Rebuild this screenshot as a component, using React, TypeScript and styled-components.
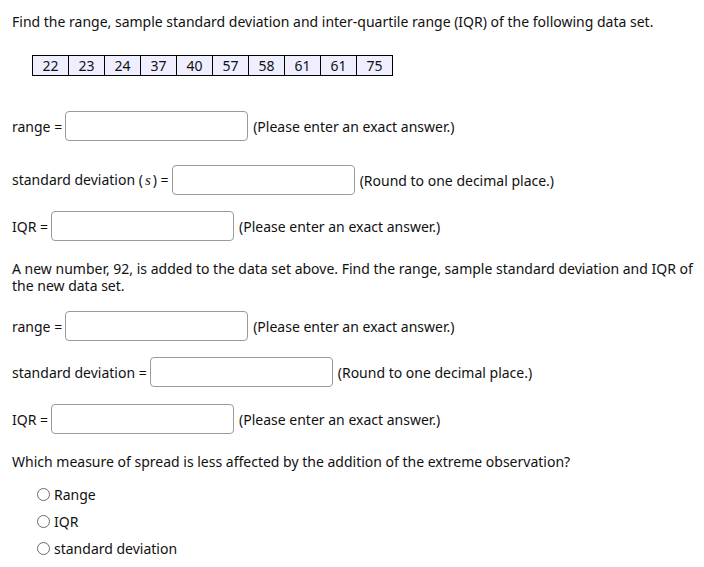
import React from "react";
import styled, { createGlobalStyle } from "styled-components";

const Global = createGlobalStyle`
  html, body { margin: 0; padding: 0; background: #fff; }
  body { font-family: "Noto Sans", "Open Sans", sans-serif; font-size: 14px; color: #111; }
`;

const Page = styled.div`
  padding: 13px 6px 0 12px;
  line-height: 17px;
`;

const Para = styled.p<{ $top?: number }>`
  margin: ${(p) => p.$top ?? 0}px 0 0 0;
  line-height: 17px;
`;

const DataTable = styled.table`
  margin: 25px 0 0 20px;
  border-collapse: collapse;
  background: #eeeeff;
`;

const Cell = styled.td`
  border: 1px solid #000;
  width: 35px;
  height: 19px;
  padding: 0;
  text-align: center;
  line-height: 19px;
`;

const Row = styled.div<{ $top: number }>`
  display: flex;
  align-items: center;
  margin-top: ${(p) => p.$top}px;
  height: 30px;
`;

const Label = styled.span`
  white-space: pre;
  margin-right: 3px;
`;

const Math = styled.span`
  font-family: "Liberation Serif", "Times New Roman", serif;
  font-style: italic;
  font-size: 15px;
  padding: 0 2px;
`;

const Answer = styled.input`
  box-sizing: border-box;
  width: 183px;
  height: 30px;
  border: 1px solid #9a9a9a;
  border-radius: 4px;
  margin: 0 5px 0 0;
  padding: 0 4px;
  font: inherit;
  background: #fff;
`;

const Hint = styled.span`
  white-space: nowrap;
`;

const Options = styled.div`
  margin-top: 16px;
  padding-left: 25px;
  display: flex;
  flex-direction: column;
  gap: 10px;
`;

const Option = styled.label`
  display: flex;
  align-items: center;
  height: 17px;
`;

const RadioDot = styled.span`
  box-sizing: border-box;
  width: 13px;
  height: 13px;
  border: 1px solid #6b6b6b;
  border-radius: 50%;
  margin-right: 4px;
  background: #fff;
`;

const data = [22, 23, 24, 37, 40, 57, 58, 61, 61, 75];

export default function App() {
  return (
    <>
      <Global />
      <Page>
        <Para>
          Find the range, sample standard deviation and inter-quartile range (IQR) of the following data set.
        </Para>
        <DataTable>
          <tbody>
            <tr>
              {data.map((d, i) => (
                <Cell key={i}>{d}</Cell>
              ))}
            </tr>
          </tbody>
        </DataTable>
        <Row $top={35}>
          <Label>range =</Label>
          <Answer />
          <Hint>(Please enter an exact answer.)</Hint>
        </Row>
        <Row $top={24}>
          <Label>
            standard deviation (<Math>s</Math>) =
          </Label>
          <Answer />
          <Hint>(Round to one decimal place.)</Hint>
        </Row>
        <Row $top={16}>
          <Label>IQR =</Label>
          <Answer />
          <Hint>(Please enter an exact answer.)</Hint>
        </Row>
        <Para $top={19}>
          A new number, 92, is added to the data set above. Find the range, sample standard deviation and IQR of the new data set.
        </Para>
        <Row $top={17}>
          <Label>range =</Label>
          <Answer />
          <Hint>(Please enter an exact answer.)</Hint>
        </Row>
        <Row $top={16}>
          <Label>standard deviation =</Label>
          <Answer />
          <Hint>(Round to one decimal place.)</Hint>
        </Row>
        <Row $top={17}>
          <Label>IQR =</Label>
          <Answer />
          <Hint>(Please enter an exact answer.)</Hint>
        </Row>
        <Para $top={19}>Which measure of spread is less affected by the addition of the extreme observation?</Para>
        <Options>
          <Option>
            <RadioDot />
            Range
          </Option>
          <Option>
            <RadioDot />
            IQR
          </Option>
          <Option>
            <RadioDot />
            standard deviation
          </Option>
        </Options>
      </Page>
    </>
  );
}
